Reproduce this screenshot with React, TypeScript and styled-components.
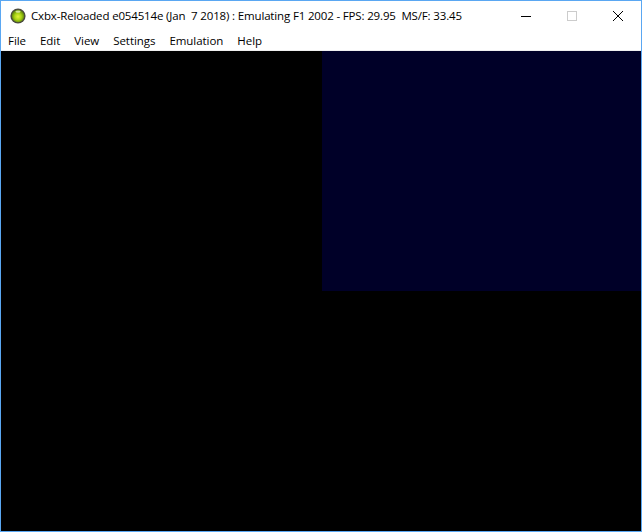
import React from "react";
import styled, { createGlobalStyle } from "styled-components";

const Global = createGlobalStyle`
  html, body { margin: 0; padding: 0; background: #fff; }
  #root { width: 642px; height: 532px; }
`;

const Win = styled.div`
  box-sizing: border-box;
  width: 642px;
  height: 532px;
  border: 1px solid #5aa7f2;
  display: flex;
  flex-direction: column;
  background: #fff;
  font-family: "Open Sans", "Noto Sans", sans-serif;
  color: #000;
  overflow: hidden;
`;

const TitleBar = styled.div`
  height: 29px;
  display: flex;
  align-items: center;
  padding-left: 9px;
`;

const AppIcon = styled.svg`
  width: 16px;
  height: 16px;
  flex: none;
`;

const Title = styled.div`
  margin-left: 5px;
  font-size: 11.5px;
  letter-spacing: -0.155px;
  white-space: pre;
  flex: 1;
  margin-top: -1px;
`;

const Controls = styled.div`
  display: flex;
  height: 100%;
`;

const Control = styled.div`
  width: 46px;
  height: 29px;
  display: flex;
  align-items: center;
  justify-content: center;
`;

const Glyph = styled.svg`
  width: 10px;
  height: 10px;
  display: block;
`;

const MenuBar = styled.nav`
  height: 20px;
  display: flex;
  align-items: center;
  padding-left: 7px;
  gap: 14px;
  border-bottom: 1px solid #f0f0f0;
  font-size: 11.5px;
  letter-spacing: -0.05px;
`;

const MenuItem = styled.span`
  display: block;
`;

const Screen = styled.main`
  flex: 1;
  background: #000;
  display: flex;
  justify-content: flex-end;
  align-items: flex-start;
`;

const Surface = styled.div`
  width: 319px;
  height: 240px;
  background: #000028;
`;

const menus = ["File", "Edit", "View", "Settings", "Emulation", "Help"];

export default function App() {
  return (
    <Win>
      <Global />
      <TitleBar>
        <AppIcon viewBox="0 0 16 16">
          <defs>
            <radialGradient id="orb" cx="0.5" cy="0.55" r="0.55">
              <stop offset="0" stopColor="#e4f23a" />
              <stop offset="0.5" stopColor="#a8d414" />
              <stop offset="1" stopColor="#54780a" />
            </radialGradient>
          </defs>
          <circle cx="8" cy="8" r="7.6" fill="#4a4a40" />
          <circle cx="8" cy="8" r="6.2" fill="url(#orb)" />
          <ellipse cx="8" cy="3.6" rx="2.6" ry="1.2" fill="#eef5c8" opacity="0.75" />
        </AppIcon>
        <Title>{"Cxbx-Reloaded e054514e (Jan  7 2018) : Emulating F1 2002 - FPS: 29.95  MS/F: 33.45"}</Title>
        <Controls>
          <Control>
            <Glyph viewBox="0 0 10 10"><path d="M0 5.5H10" stroke="#000" strokeWidth="1" /></Glyph>
          </Control>
          <Control>
            <Glyph viewBox="0 0 10 10"><rect x="0.5" y="0.5" width="9" height="9" fill="none" stroke="#ccc" /></Glyph>
          </Control>
          <Control>
            <Glyph viewBox="0 0 10 10"><path d="M0 0L10 10M10 0L0 10" stroke="#000" strokeWidth="1" /></Glyph>
          </Control>
        </Controls>
      </TitleBar>
      <MenuBar>
        {menus.map((m) => <MenuItem key={m}>{m}</MenuItem>)}
      </MenuBar>
      <Screen>
        <Surface />
      </Screen>
    </Win>
  );
}
